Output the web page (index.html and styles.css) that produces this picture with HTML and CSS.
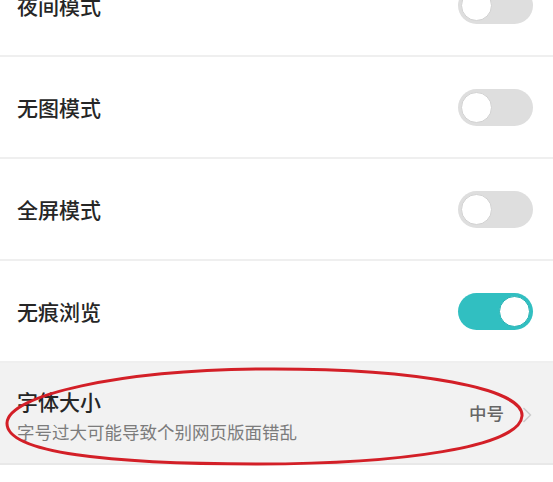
FILE: index.html
```html
<!DOCTYPE html>
<html lang="zh-CN">
<head>
<meta charset="utf-8">
<link rel="stylesheet" href="styles.css">
</head>
<body>
<div class="list">
  <div class="row">
    <span class="title">夜间模式</span>
    <span class="switch"><span class="knob"></span></span>
  </div>
  <div class="row">
    <span class="title">无图模式</span>
    <span class="switch"><span class="knob"></span></span>
  </div>
  <div class="row">
    <span class="title">全屏模式</span>
    <span class="switch"><span class="knob"></span></span>
  </div>
  <div class="row">
    <span class="title">无痕浏览</span>
    <span class="switch on"><span class="knob"></span></span>
  </div>
  <div class="row row-gray">
    <div class="texts">
      <span class="title">字体大小</span>
      <span class="sub">字号过大可能导致个别网页版面错乱</span>
    </div>
    <div class="value">
      <span class="val-text">中号</span>
      <svg class="chev" width="10" height="16" viewBox="0 0 10 16"><path d="M1.5 1 L8.5 8 L1.5 15" fill="none" stroke="#c9c9c9" stroke-width="1.4"/></svg>
    </div>
    <svg class="mark" width="553" height="120" viewBox="0 0 553 120">
      <path d="M262 6 C420 5 524 26 522 53 C520 84 400 101 258 101 C110 101 6 90 7 60 C8 32 120 7 262 6 Z" fill="none" stroke="#d31f27" stroke-width="3"/>
    </svg>
  </div>
</div>
</body>
</html>
```
FILE: styles.css
```css
html, body {
  margin: 0;
  padding: 0;
  background: #ffffff;
  overflow: hidden;
}
body {
  width: 553px;
  height: 482px;
  font-family: "Noto Sans CJK SC", "Noto Sans", sans-serif;
}
.list {
  margin-top: -45px;
  display: flex;
  flex-direction: column;
}
.row {
  height: 100px;
  border-bottom: 2px solid #efefef;
  display: flex;
  align-items: center;
  justify-content: space-between;
  padding: 0 20px 0 17px;
  position: relative;
}
.title {
  font-size: 21px;
  font-weight: 500;
  color: #262626;
  line-height: 1;
}
.switch {
  width: 75px;
  height: 37px;
  border-radius: 19px;
  background: #dedede;
  display: flex;
  align-items: center;
  justify-content: flex-start;
  padding: 0 3px;
  box-sizing: border-box;
}
.switch .knob {
  width: 31px;
  height: 31px;
  border-radius: 50%;
  background: #ffffff;
  box-sizing: border-box;
  border: 1px solid #d2d2d2;
}
.switch.on {
  background: #31bfc1;
  justify-content: flex-end;
}
.switch.on .knob {
  border-color: #2bb3b5;
}
.row-gray {
  background: #f2f2f2;
  border-bottom: 2px solid #e8e8e8;
  padding-right: 21px;
}
.texts {
  display: flex;
  flex-direction: column;
  gap: 11px;
  padding-top: 5px;
}
.texts .title {
  font-size: 21px;
  color: #262626;
}
.sub {
  font-size: 17.5px;
  color: #7c7c7c;
  line-height: 1;
}
.value {
  display: flex;
  align-items: center;
  gap: 18px;
}
.val-text {
  font-size: 17.5px;
  font-weight: 500;
  color: #666666;
  line-height: 1;
}
.chev {
  display: block;
  margin-top: 3px;
}
.mark {
  position: absolute;
  left: 0;
  top: 0;
  pointer-events: none;
}
```
